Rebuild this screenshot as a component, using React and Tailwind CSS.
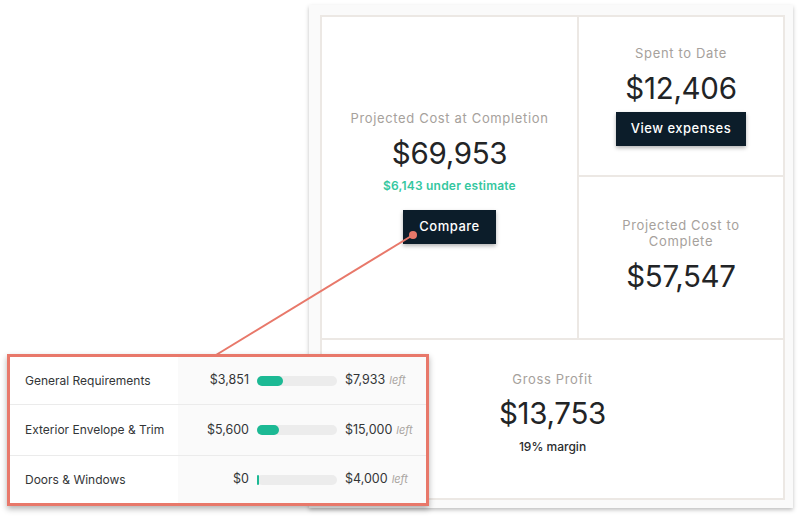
const rows = [
  { name: "General Requirements", spent: "$3,851", left: "$7,933", pct: 33, h: "h-[47px]" },
  { name: "Exterior Envelope & Trim", spent: "$5,600", left: "$15,000", pct: 27, h: "h-[51px]" },
  { name: "Doors & Windows", spent: "$0", left: "$4,000", pct: 2, h: "h-[48px]" },
];

function Label({ children }) {
  return (
    <p className="text-[13px] leading-[16px] tracking-[0.65px] text-[#a6a19c]">
      {children}
    </p>
  );
}

function Amount({ children }) {
  return (
    <p className="text-[29.5px] leading-[36px] text-[#222426] tracking-[-0.3px]">
      {children}
    </p>
  );
}

function DarkButton({ children, className = "" }) {
  return (
    <button
      className={`bg-[#0c1d2a] text-white text-[13px] font-medium tracking-[0.5px] shadow-[0_2px_4px_rgba(0,0,0,0.3)] ${className}`}
    >
      {children}
    </button>
  );
}

export default function App() {
  return (
    <div
      className="relative w-[801px] h-[517px] bg-white overflow-hidden"
      style={{ fontFamily: "Inter, 'Liberation Sans', sans-serif" }}
    >
      <div className="ml-[309px] mt-[5px] w-[484px] h-[503px] bg-[#fafafa] pl-[11px] pt-[10px] pr-[8px] pb-[8px] shadow-[0_2px_4px_rgba(0,0,0,0.25)]">
        <div className="h-full flex flex-col bg-white border-2 border-[#ece8e4]">
          <div className="flex h-[323px] border-b-2 border-[#ece8e4]">
            <div className="w-[257px] border-r-2 border-[#ece8e4] flex flex-col items-center pt-[93px]">
              <Label>Projected Cost at Completion</Label>
              <div className="mt-[9px]">
                <Amount>$69,953</Amount>
              </div>
              <p className="mt-[7px] text-[12px] leading-[16px] font-semibold tracking-[0.2px] text-[#35c79f]">
                $6,143 under estimate
              </p>
              <DarkButton className="mt-[16px] w-[93px] h-[34px]">Compare</DarkButton>
            </div>
            <div className="flex-1 flex flex-col">
              <div className="h-[160px] border-b-2 border-[#ece8e4] flex flex-col items-center pt-[28px]">
                <Label>Spent to Date</Label>
                <div className="mt-[9px]">
                  <Amount>$12,406</Amount>
                </div>
                <DarkButton className="mt-[6px] w-[130px] h-[34px]">View expenses</DarkButton>
              </div>
              <div className="flex-1 flex flex-col items-center pt-[40px] text-center">
                <Label>
                  Projected Cost to
                  <br />
                  Complete
                </Label>
                <div className="mt-[9px]">
                  <Amount>$57,547</Amount>
                </div>
              </div>
            </div>
          </div>
          <div className="flex-1 flex flex-col items-center pt-[31px]">
            <Label>Gross Profit</Label>
            <div className="mt-[8px]">
              <Amount>$13,753</Amount>
            </div>
            <p className="mt-[8px] text-[12px] leading-[16px] font-medium text-[#2a2c2e]">
              19% margin
            </p>
          </div>
        </div>
      </div>

      <svg className="absolute left-0 top-0" width="801" height="517">
        <line x1="216" y1="355" x2="413" y2="235" stroke="#e8786a" strokeWidth="2" />
        <circle cx="413" cy="235" r="4" fill="#e8786a" />
      </svg>

      <div className="absolute left-[7px] top-[354px] w-[422px] h-[152px] border-[3px] border-[#e8786a] bg-white shadow-[0_3px_6px_rgba(0,0,0,0.3)] flex flex-col">
        {rows.map((r, i) => (
          <div
            key={r.name}
            className={`${r.h} flex items-center ${i > 0 ? "border-t border-[#ebebeb]" : ""}`}
          >
            <div className="w-[168px] h-full flex items-center pl-[15px] text-[12px] text-[#333537]">
              {r.name}
            </div>
            <div className="flex-1 h-full flex items-center bg-[#fafafa] text-[12.5px] text-[#333537]">
              <span className="w-[71px] text-right">{r.spent}</span>
              <div className="ml-[8px] w-[80px] h-[10px] rounded-full bg-[#ececec]">
                <div
                  className="h-full rounded-full bg-[#1cb994]"
                  style={{ width: `${r.pct}%` }}
                />
              </div>
              <span className="ml-[8px]">{r.left}</span>
              <span className="ml-[4px] text-[11px] italic text-[#aaa6a2]">left</span>
            </div>
          </div>
        ))}
      </div>
    </div>
  );
}
